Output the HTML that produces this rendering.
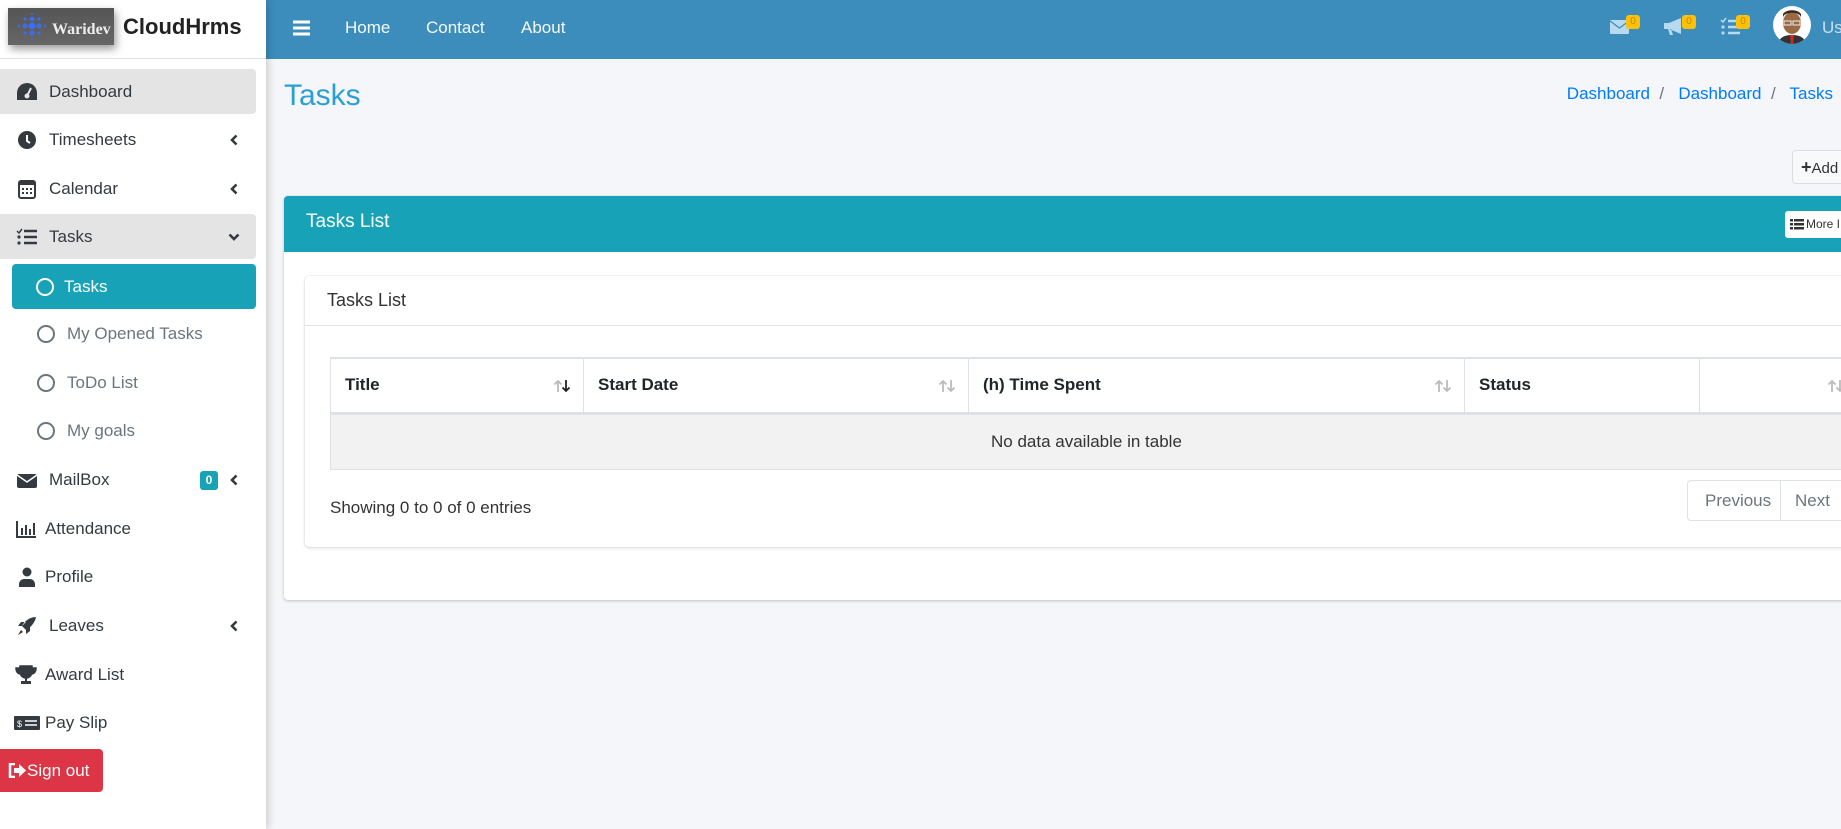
<!DOCTYPE html>
<html><head><meta charset="utf-8"><style>
*{box-sizing:border-box;margin:0;padding:0}
body{width:1841px;height:829px;overflow:hidden;background:#f4f6f9;font-family:"Source Sans Pro","Liberation Sans",sans-serif;position:relative;color:#212529}
.a{position:absolute}
#side{left:0;top:0;width:266px;height:829px;background:#fff;box-shadow:2px 0 8px rgba(0,0,0,.18);z-index:3}
#top{left:266px;top:0;width:1575px;height:59px;background:#3c8dbc;z-index:2}
.mi{position:absolute;left:0;width:256px;height:45px;font-size:17px;color:#343a40;display:flex;align-items:center}
.mi .ic{position:absolute;left:16px;top:13px;width:22px;height:20px}
.mi span{position:absolute;left:49px}
.chev{position:absolute;left:230px;top:17px;width:8px;height:12px}
.sub span{left:67px;color:#6c757d}
.circ{position:absolute;left:37px;top:14px;width:18px;height:18px;border:2px solid #6c757d;border-radius:50%}
.nav{color:#fff;font-size:17px;top:18px;opacity:.95}
.badge{background:#ffc107;color:#c08a00;font-size:10px;border-radius:3px;width:14px;height:14px;text-align:center;line-height:14px}
th{font-weight:bold;text-align:left;font-size:17px;padding-left:14px;border-right:1px solid #dee2e6;height:55px;position:relative}
.srt{position:absolute;right:12px;top:20px;width:18px;height:14px}
</style></head><body>
<svg width="0" height="0" style="position:absolute"><defs>
<symbol id="ch" viewBox="0 0 8 12"><path d="M6.5 1.5L2 6l4.5 4.5" stroke="#343a40" stroke-width="2.6" fill="none"/></symbol>
<symbol id="sa" viewBox="0 0 18 14"><path d="M5 13V2M1.5 5.5L5 2l3.5 3.5" stroke="#bbb" stroke-width="1.8" fill="none"/><path d="M13 1v11M9.5 8.5L13 12l3.5-3.5" stroke="#bbb" stroke-width="1.8" fill="none"/></symbol>
</defs></svg>
<div id="side" class="a">
 <div class="a" style="left:8px;top:8px;width:106px;height:37px;background:linear-gradient(#555,#666);box-shadow:2px 4px 8px rgba(0,0,0,.4)">
  <svg class="a" style="left:8px;top:5px" width="32" height="27" viewBox="0 0 32 27"><g fill="#3b6df0"><circle cx="16" cy="13" r="3.5"/><circle cx="9" cy="13" r="2.5"/><circle cx="23" cy="13" r="2.5"/><circle cx="16" cy="6" r="2.5"/><circle cx="16" cy="20" r="2.5"/><circle cx="9" cy="6" r="1.6"/><circle cx="23" cy="6" r="1.6"/><circle cx="9" cy="20" r="1.6"/><circle cx="23" cy="20" r="1.6"/><circle cx="3" cy="13" r="1.2"/><circle cx="29" cy="13" r="1.2"/><circle cx="16" cy="1" r="1"/><circle cx="16" cy="26" r="1"/></g></svg>
  <div class="a" style="left:44px;top:13px;color:#eee;font-family:'Liberation Serif',serif;font-weight:bold;font-size:16px;line-height:18px">Waridev</div>
 </div>
 <div class="a" style="left:123px;top:14px;font-size:22px;font-weight:bold;color:#222">CloudHrms</div>
 <div class="a" style="left:0;top:58px;width:266px;height:1px;background:#dee2e6"></div>

 <div class="mi" style="top:69px;background:#e4e4e4;border-radius:0 4px 4px 0"><svg class="ic" viewBox="0 0 22 20"><path d="M11 1A10 10 0 0 0 1 11v7h20v-7A10 10 0 0 0 11 1z" fill="#343a40"/><circle cx="11" cy="14" r="2.5" fill="#e4e4e4"/><path d="M11 14L15 6" stroke="#e4e4e4" stroke-width="2"/></svg><span>Dashboard</span></div>
 <div class="mi" style="top:117px"><svg class="ic" viewBox="0 0 22 20"><circle cx="11" cy="10" r="9" fill="#343a40"/><path d="M11 5v6l3 2" stroke="#fff" stroke-width="2" fill="none"/></svg><span>Timesheets</span><svg class="chev"><use href="#ch"/></svg></div>
 <div class="mi" style="top:166px"><svg class="ic" viewBox="0 0 22 20"><rect x="3" y="2" width="16" height="17" rx="2" fill="none" stroke="#343a40" stroke-width="2"/><rect x="3" y="2" width="16" height="4" fill="#343a40"/><g fill="#343a40"><rect x="6" y="9" width="2" height="2"/><rect x="10" y="9" width="2" height="2"/><rect x="14" y="9" width="2" height="2"/><rect x="6" y="13" width="2" height="2"/><rect x="10" y="13" width="2" height="2"/><rect x="14" y="13" width="2" height="2"/></g></svg><span>Calendar</span><svg class="chev"><use href="#ch"/></svg></div>
 <div class="mi" style="top:214px;background:#e4e4e4;border-radius:0 4px 4px 0"><svg class="ic" viewBox="0 0 22 20"><g stroke="#343a40" stroke-width="2.5"><path d="M8 4h13M8 10h13M8 16h13"/></g><path d="M1 4l2 2 3-4" stroke="#343a40" stroke-width="1.5" fill="none"/><circle cx="3" cy="10" r="1.6" fill="#343a40"/><circle cx="3" cy="16" r="1.6" fill="#343a40"/></svg><span>Tasks</span><svg class="chev" style="transform:rotate(-90deg)"><use href="#ch"/></svg></div>
 <div class="mi" style="top:264px;left:12px;width:244px;background:#17a2b8;border-radius:4px"><div class="circ" style="left:24px;border-color:#fff"></div><span style="left:52px;color:#fff">Tasks</span></div>
 <div class="mi sub" style="top:311px"><div class="circ"></div><span>My Opened Tasks</span></div>
 <div class="mi sub" style="top:360px"><div class="circ"></div><span>ToDo List</span></div>
 <div class="mi sub" style="top:408px"><div class="circ"></div><span>My goals</span></div>
 <div class="mi" style="top:457px"><svg class="ic" viewBox="0 0 22 20"><rect x="1" y="4" width="20" height="14" rx="2" fill="#343a40"/><path d="M1 5l10 7 10-7" stroke="#fff" stroke-width="1.5" fill="none"/></svg><span>MailBox</span><div class="a" style="left:200px;top:14px;width:18px;height:19px;background:#17a2b8;border-radius:3px;color:#fff;font-size:12px;font-weight:bold;text-align:center;line-height:19px">0</div><svg class="chev"><use href="#ch"/></svg></div>
 <div class="mi" style="top:506px"><svg class="ic" style="left:15px" viewBox="0 0 22 20"><path d="M2 2v16h19" stroke="#343a40" stroke-width="2" fill="none"/><g fill="#343a40"><rect x="6" y="9" width="2" height="7"/><rect x="10" y="6" width="2" height="10"/><rect x="14" y="10" width="2" height="6"/><rect x="18" y="4" width="2" height="12"/></g></svg><span style="left:45px">Attendance</span></div>
 <div class="mi" style="top:554px"><svg class="ic" viewBox="0 0 22 20"><circle cx="11" cy="5" r="4.5" fill="#343a40"/><path d="M3 20v-3a5 5 0 0 1 5-5h6a5 5 0 0 1 5 5v3z" fill="#343a40"/></svg><span style="left:45px">Profile</span></div>
 <div class="mi" style="top:603px"><svg class="ic" viewBox="0 0 22 20"><path d="M20 1C13 1 8 6 6 10l4 4c4-2 9-7 10-13zM6 10H2l3-4h5zM10 14v4l4-3v-5zM5 14l-3 5 5-3z" fill="#343a40"/></svg><span>Leaves</span><svg class="chev"><use href="#ch"/></svg></div>
 <div class="mi" style="top:652px"><svg class="ic" style="left:15px" viewBox="0 0 22 20"><path d="M5 1h12v6a6 6 0 0 1-12 0zM5 3H1c0 4 2 6 5 6M17 3h4c0 4-2 6-5 6" fill="#343a40" stroke="#343a40" stroke-width="1.5"/><rect x="10" y="12" width="2" height="4" fill="#343a40"/><rect x="6" y="16" width="10" height="3" fill="#343a40"/></svg><span style="left:45px">Award List</span></div>
 <div class="mi" style="top:700px"><svg class="ic" style="left:14px;width:26px" viewBox="0 0 26 20"><rect x="0" y="3" width="26" height="14" rx="1" fill="#343a40"/><text x="3" y="14" font-size="9" fill="#fff" font-family="Liberation Sans">$</text><path d="M11 8h12M11 12h12" stroke="#fff" stroke-width="1.5"/></svg><span style="left:45px">Pay Slip</span></div>
 <div class="a" style="left:0;top:749px;width:103px;height:43px;background:#dc3545;border-radius:0 4px 4px 0;color:#fff;font-size:17px;line-height:43px;padding-left:27px">Sign out
  <svg class="a" style="left:8px;top:14px" width="18" height="15" viewBox="0 0 18 15"><path d="M7 1H2v13h5" stroke="#fff" stroke-width="2.5" fill="none"/><path d="M6 5h5V1l7 6.5-7 6.5V10H6z" fill="#fff"/></svg></div>
</div>

<div id="top" class="a">
 <svg class="a" style="left:27px;top:20px" width="17" height="16"><path d="M0 2h17M0 8h17M0 14h17" stroke="#fff" stroke-width="3"/></svg>
 <div class="a nav" style="left:79px">Home</div>
 <div class="a nav" style="left:160px">Contact</div>
 <div class="a nav" style="left:255px">About</div>
 <svg class="a" style="left:1344px;top:20px" width="19" height="14"><rect width="19" height="14" rx="1" fill="#b8daf0"/><path d="M0 1l9.5 7L19 1" stroke="#3c8dbc" stroke-width="1.3" fill="none"/></svg>
 <div class="a badge" style="left:1360px;top:15px">0</div>
 <svg class="a" style="left:1397px;top:17px" width="21" height="19"><path d="M1 6h5l12-5v16L6 12H1z M5 12l2 6h3l-2-6z" fill="#b8daf0"/></svg>
 <div class="a badge" style="left:1416px;top:15px">0</div>
 <svg class="a" style="left:1454px;top:17px" width="20" height="18"><path d="M1 3l2 2 3-4" stroke="#b8daf0" stroke-width="1.5" fill="none"/><g stroke="#b8daf0" stroke-width="2.5"><path d="M8 4h12M8 10h12M8 16h12"/></g><circle cx="3" cy="10" r="1.6" fill="#b8daf0"/><circle cx="3" cy="16" r="1.6" fill="#b8daf0"/></svg>
 <div class="a badge" style="left:1470px;top:15px">0</div>
 <svg class="a" style="left:1507px;top:6px" width="38" height="38" viewBox="0 0 38 38"><clipPath id="c"><circle cx="19" cy="19" r="19"/></clipPath><g clip-path="url(#c)"><rect width="38" height="38" fill="#fff"/><path d="M5 40c0-8 6-11 14-11s14 3 14 11z" fill="#333"/><path d="M17 29h4l-1 9h-2z" fill="#d22"/><ellipse cx="19" cy="17" rx="9" ry="11" fill="#9a6a45"/><path d="M10 12c0-7 18-7 18 0v-4c-3-5-15-5-18 0z" fill="#3a2a1e"/><rect x="11" y="15" width="7" height="4" fill="none" stroke="#eee" stroke-width="1"/><rect x="20" y="15" width="7" height="4" fill="none" stroke="#eee" stroke-width="1"/></g></svg>
 <div class="a nav" style="left:1556px;color:#cfe4f2">Us</div>
</div>

<div class="a" style="left:284px;top:79px;font-size:30px;color:#2a9fd6">Tasks</div>
<div class="a" style="right:8px;top:84px;font-size:17px;color:#007bff;white-space:pre">Dashboard  <span style="color:#6c757d">/</span>   Dashboard  <span style="color:#6c757d">/</span>   Tasks</div>
<div class="a" style="left:1792px;top:150px;width:60px;height:34px;background:#f8f9fa;border:1px solid #ddd;border-radius:4px;font-size:15px;line-height:32px;padding-left:8px;color:#333"><b style="font-size:18px">+</b>Add</div>

<div class="a" style="left:284px;top:196px;width:1570px;height:404px;background:#fff;border-radius:4px;box-shadow:0 0 1px rgba(0,0,0,.13),0 1px 3px rgba(0,0,0,.2)">
 <div class="a" style="left:0;top:0;width:100%;height:56px;background:#17a2b8;border-radius:4px 4px 0 0"></div>
 <div class="a" style="left:22px;top:15px;font-size:19px;color:#fff">Tasks List</div>
 <div class="a" style="left:1501px;top:15px;width:70px;height:27px;background:#fff;border-radius:3px;font-size:12px;line-height:27px;padding-left:21px;color:#333">More I
  <svg class="a" style="left:5px;top:8px" width="14" height="11"><g fill="#333"><rect y="0" width="3" height="2.5"/><rect y="4" width="3" height="2.5"/><rect y="8" width="3" height="2.5"/><rect x="4" y="0" width="10" height="2.5"/><rect x="4" y="4" width="10" height="2.5"/><rect x="4" y="8" width="10" height="2.5"/></g></svg></div>

 <div class="a" style="left:21px;top:80px;width:1560px;height:271px;border-radius:4px;box-shadow:0 0 1px rgba(0,0,0,.2),0 1px 3px rgba(0,0,0,.15)">
  <div class="a" style="left:22px;top:14px;font-size:18px;color:#333">Tasks List</div>
  <div class="a" style="left:0;top:49px;width:100%;height:1px;background:#e3e3e3"></div>
  <table class="a" style="left:25px;top:81px;width:1540px;border-collapse:collapse;border-top:2px solid #dee2e6;border-left:1px solid #dee2e6">
   <tr style="border-bottom:3px solid #dee2e6">
    <th style="width:253px">Title<svg class="srt" viewBox="0 0 18 14"><path d="M5 13V2M1.5 5.5L5 2l3.5 3.5" stroke="#bbb" stroke-width="1.8" fill="none"/><path d="M13 1v11M9.5 8.5L13 12l3.5-3.5" stroke="#222" stroke-width="1.8" fill="none"/></svg></th>
    <th style="width:385px">Start Date<svg class="srt"><use href="#sa"/></svg></th>
    <th style="width:496px">(h) Time Spent<svg class="srt"><use href="#sa"/></svg></th>
    <th style="width:235px">Status</th>
    <th><svg class="srt" style="right:24px"><use href="#sa"/></svg></th>
   </tr>
   <tr><td colspan="5" style="height:56px;background:#f2f2f2;border-bottom:1px solid #dee2e6;font-size:17px;color:#333;padding-left:660px">No data available in table</td></tr>
  </table>
  <div class="a" style="left:25px;top:222px;font-size:17px;color:#333">Showing 0 to 0 of 0 entries</div>
  <div class="a" style="left:1382px;top:204px;width:180px;height:41px;border:1px solid #dee2e6;border-radius:4px;font-size:17px;color:#6c757d;line-height:39px">
   <span class="a" style="left:17px">Previous</span><div class="a" style="left:92px;top:0;width:1px;height:39px;background:#dee2e6"></div><span class="a" style="left:107px">Next</span></div>
 </div>
</div>
</body></html>
